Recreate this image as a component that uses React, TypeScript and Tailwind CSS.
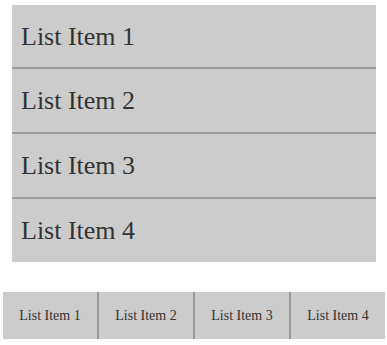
const items = ['List Item 1', 'List Item 2', 'List Item 3', 'List Item 4']

export default function App() {
  return (
    <div className="w-[387px] h-[345px] bg-white font-['Liberation_Serif',serif] text-[#333]">
      <ul className="ml-[12px] pt-[5px] w-[364px]">
        {items.map((item, i) => (
          <li
            key={item}
            className={
              i === 0
                ? 'h-[62px] bg-[#cccccc] flex items-center pl-[9px] text-[26px]'
                : 'h-[65px] bg-[#cccccc] flex items-center pl-[9px] text-[26px] border-t-2 border-[#9a9a9a]'
            }
          >
            {item}
          </li>
        ))}
      </ul>
      <ul className="ml-[3px] mt-[30px] w-[382px] h-[47px] flex">
        {items.map((item, i) => (
          <li
            key={item}
            className={
              i === 0
                ? 'w-[94px] bg-[#cccccc] flex items-center justify-center text-[14px]'
                : 'w-[96px] bg-[#cccccc] flex items-center justify-center text-[14px] border-l-2 border-[#9a9a9a]'
            }
          >
            {item}
          </li>
        ))}
      </ul>
    </div>
  )
}
